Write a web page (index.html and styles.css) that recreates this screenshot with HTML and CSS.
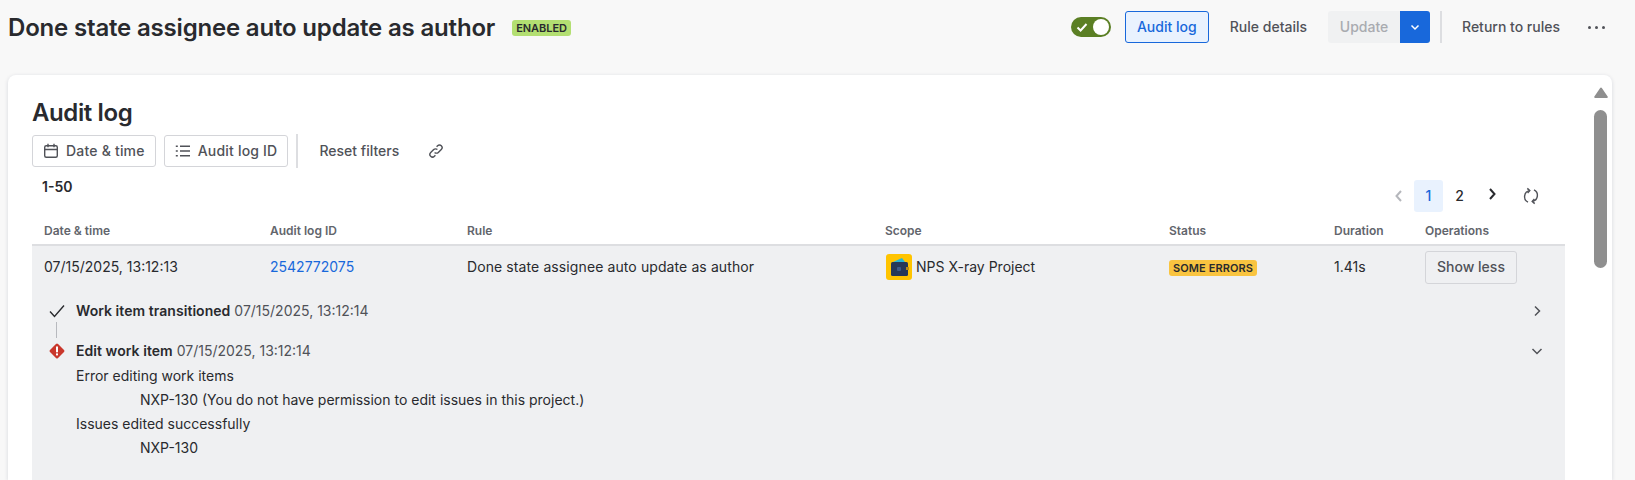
FILE: index.html
```html
<!DOCTYPE html>
<html lang="en">
<head>
  <meta charset="UTF-8" />
  <title>Audit log</title>
  <link rel="stylesheet" href="styles.css">
</head>
<body>

  <!-- Top bar -->
  <header class="top-bar">
    <div class="title-group">
      <h1 class="rule-title">Done state assignee auto update as author</h1>
      <span class="lozenge lozenge-green">Enabled</span>
    </div>
    <div class="actions">
      <span class="toggle">
        <svg class="toggle-check" width="12" height="12" viewBox="0 0 12 12"><path d="M1.500 6.500 4.600 9.500 10.500 3" fill="none" stroke="#fff" stroke-width="2"/></svg>
        <span class="toggle-knob"></span>
      </span>
      <button class="btn btn-selected">Audit log</button>
      <button class="btn btn-plain btn-details">Rule details</button>
      <div class="split-btn">
        <button class="btn btn-disabled">Update</button>
        <button class="btn btn-primary">
          <svg width="12" height="12" viewBox="0 0 12 12"><path d="M2.500 4.500 6 8 9.500 4.500" fill="none" stroke="#fff" stroke-width="1.500"/></svg>
        </button>
      </div>
      <span class="divider divider-top"></span>
      <button class="btn btn-plain btn-return">Return to rules</button>
      <span class="more-dots"><i></i><i></i><i></i></span>
    </div>
  </header>

  <!-- Main card -->
  <main class="card">
    <div class="card-body">
      <h2 class="card-title">Audit log</h2>

      <div class="filters">
        <button class="btn btn-outline btn-filter">
          <svg width="16" height="16" viewBox="0 0 16 16" fill="none" stroke="#505258" stroke-width="1.400"><rect x="1.700" y="2.700" width="12.600" height="11.600" rx="1.500"/><path d="M1.700 6.500h12.600M5 .8v3.400M11 .8v3.400"/></svg>
          Date &amp; time
        </button>
        <button class="btn btn-outline btn-filter">
          <svg width="16" height="16" viewBox="0 0 16 16" fill="none" stroke="#505258" stroke-width="1.400"><path d="M5 3.200h10M5 8h10M5 12.800h10M.8 3.200h2M.8 8h2M.8 12.800h2"/></svg>
          Audit log ID
        </button>
        <span class="divider divider-filters"></span>
        <button class="btn btn-plain btn-reset">Reset filters</button>
        <svg class="link-icon" width="16" height="16" viewBox="0 0 16 16" fill="none" stroke="#505258" stroke-width="1.400"><path d="M6.600 9.400a2.600 2.600 0 0 0 3.700 0l3-3a2.600 2.600 0 0 0-3.700-3.700l-1 1"/><path d="M9.400 6.600a2.600 2.600 0 0 0-3.700 0l-3 3a2.600 2.600 0 0 0 3.700 3.700l1-1"/></svg>
      </div>

      <div class="list-meta">
        <span class="range">1-50</span>
        <nav class="pager">
          <svg class="pager-arrow" width="16" height="16" viewBox="0 0 16 16"><path d="M10 3 5.500 8l4.500 5" fill="none" stroke="#b5b7bc" stroke-width="2"/></svg>
          <span class="page page-current">1</span>
          <span class="page page-other">2</span>
          <svg class="pager-arrow pager-next" width="16" height="16" viewBox="0 0 16 16"><path d="M6 3l4.500 5L6 13" fill="none" stroke="#292a2e" stroke-width="2"/></svg>
          <svg class="refresh" width="16" height="18" viewBox="0 0 16 18" fill="none" stroke="#505258" stroke-width="1.400"><path d="M5 15.200A6.200 6.200 0 0 1 6.500 3.600"/><path d="M4.300 1.400 6.800 3.600 4.600 6"/><path d="M11 2.800A6.200 6.200 0 0 1 9.500 14.400"/><path d="M11.700 16.600 9.200 14.400 11.400 12"/></svg>
        </nav>
      </div>

      <!-- Log table -->
      <div class="log-row log-head">
        <span>Date &amp; time</span>
        <span>Audit log ID</span>
        <span>Rule</span>
        <span>Scope</span>
        <span>Status</span>
        <span>Duration</span>
        <span>Operations</span>
      </div>

      <section class="log-entry">
        <div class="log-row">
          <span>07/15/2025, 13:12:13</span>
          <a class="log-link" href="#">2542772075</a>
          <span class="rule-name">Done state assignee auto update as author</span>
          <span class="scope">
            <svg class="project-icon" width="26" height="26" viewBox="0 0 26 26">
              <rect width="26" height="26" rx="3" fill="#ffc400"/>
              <path d="M7 8 16 4l3 4z" fill="#2ab5d6"/>
              <rect x="5" y="8" width="17" height="14" rx="1.500" fill="#253858"/>
              <rect x="11" y="13" width="4" height="4" rx="1" fill="#3c5a8a"/>
              <rect x="20" y="13" width="3" height="3" fill="#b98a16"/>
            </svg>
            NPS X-ray Project
          </span>
          <span><span class="lozenge lozenge-yellow">Some errors</span></span>
          <span>1.41s</span>
          <span><button class="btn btn-outline btn-less">Show less</button></span>
        </div>

        <div class="step">
          <svg class="step-icon" width="16" height="16" viewBox="0 0 16 16"><path d="M1 8.500 5.500 13.500 15 2.500" fill="none" stroke="#292a2e" stroke-width="1.400"/></svg>
          <p class="step-text"><b>Work item transitioned</b> 07/15/2025, 13:12:14</p>
          <svg class="step-chevron" width="12" height="12" viewBox="0 0 12 12"><path d="M4 1.500 8.500 6 4 10.500" fill="none" stroke="#505258" stroke-width="1.500"/></svg>
        </div>
        <span class="step-line"></span>
        <div class="step step-error">
          <svg class="step-icon" width="18" height="18" viewBox="0 0 18 18">
            <rect x="3.300" y="3.300" width="11.400" height="11.400" rx="1.500" transform="rotate(45 9 9)" fill="#c9372c"/>
            <rect x="8" y="4.500" width="2" height="5.800" fill="#fff"/>
            <rect x="8" y="11.400" width="2" height="2" fill="#fff"/>
          </svg>
          <p class="step-text"><b>Edit work item</b> 07/15/2025, 13:12:14</p>
          <svg class="step-chevron" width="12" height="12" viewBox="0 0 12 12"><path d="M1.500 4 6 8.500 10.500 4" fill="none" stroke="#505258" stroke-width="1.500"/></svg>
        </div>

        <div class="step-detail">
          <p>Error editing work items</p>
          <p class="detail-item">NXP-130 (You do not have permission to edit issues in this project.)</p>
          <p>Issues edited successfully</p>
          <p class="detail-item">NXP-130</p>
        </div>
      </section>
    </div>

    <!-- Scrollbar -->
    <div class="scrollbar">
      <svg class="scroll-up" width="14" height="11" viewBox="0 0 14 11"><path d="M7 1.500 12.800 10H1.200z" fill="#8f8f8f" stroke="#8f8f8f" stroke-width="2" stroke-linejoin="round"/></svg>
      <span class="scroll-thumb"></span>
    </div>
  </main>

</body>
</html>
```

FILE: styles.css
```css
/* Basic reset */
* {
  box-sizing: border-box;
  margin: 0;
  padding: 0;
}
html, body {
  height: 480px;
  overflow: hidden;
}
body {
  font-family: Inter, 'Noto Sans', sans-serif;
  font-size: 14px;
  line-height: 20px;
  background: #f8f8f8;
  color: #292a2e;
  padding: 0 8px;
}

/* Shared buttons */
.btn {
  font: inherit;
  height: 32px;
  padding: 0 12px;
  border: 1px solid transparent;
  border-radius: 3px;
  background: none;
  color: #505258;
  display: inline-flex;
  align-items: center;
  gap: 8px;
  white-space: nowrap;
}
.btn-plain {
  font-weight: 500;
}
.btn-selected {
  background: #e9f2fe;
  border-color: #1868db;
  color: #1868db;
  width: 84px;
  padding: 0;
  justify-content: center;
  font-weight: 500;
}
.btn-outline {
  background: transparent;
  border-color: #d4d5d9;
  font-weight: 500;
  padding: 0 10px;
}
.btn-filter {
  gap: 7px;
  letter-spacing: 0.2px;
}
.btn-disabled {
  background: #f0f1f2;
  color: #a9abb0;
  width: 72px;
  padding: 0;
  justify-content: center;
  border-radius: 3px 0 0 3px;
  font-weight: 500;
}
.btn-primary {
  background: #1868db;
  width: 30px;
  padding: 0;
  justify-content: center;
  border-radius: 0 3px 3px 0;
}

/* Lozenges */
.lozenge {
  display: inline-block;
  font-size: 11px;
  line-height: 16px;
  font-weight: 600;
  text-transform: uppercase;
  padding: 0 4px;
  border-radius: 3px;
  color: #292a2e;
}
.lozenge-green {
  background: #b3df72;
  letter-spacing: -0.05px;
}
.lozenge-yellow {
  background: #f9c440;
  letter-spacing: 0.1px;
}

/* Top bar */
.top-bar {
  height: 75px;
  display: flex;
  justify-content: space-between;
  align-items: flex-start;
}
.title-group {
  display: flex;
  align-items: center;
  gap: 17px;
  height: 56px;
}
.rule-title {
  font-size: 24px;
  line-height: 28px;
  font-weight: 600;
  letter-spacing: -0.18px;
}
.actions {
  display: flex;
  align-items: center;
  height: 32px;
  margin-top: 11px;
  padding-right: 22px;
}
.toggle {
  width: 40px;
  height: 20px;
  border-radius: 10px;
  background: #5b7f24;
  display: flex;
  align-items: center;
  justify-content: space-between;
  padding: 0 2px 0 5px;
  margin-right: 14px;
}
.toggle-knob {
  width: 16px;
  height: 16px;
  border-radius: 50%;
  background: #fff;
}
.btn-details {
  margin: 0 8px;
}
.divider {
  display: block;
  width: 2px;
  background: #dddee1;
}
.split-btn {
  display: flex;
}
.divider-top {
  height: 32px;
  margin: 0 7px 0 10px;
}
.btn-return {
  margin-right: 15px;
}
.more-dots {
  display: flex;
  gap: 4px;
}
.more-dots i {
  width: 3px;
  height: 3px;
  border-radius: 50%;
  background: #505258;
}

/* Main card */
.card {
  width: 1604px;
  height: 405px;
  background: #fff;
  border-radius: 8px 8px 0 0;
  box-shadow: 0 1px 4px rgba(9, 30, 66, 0.14);
  display: flex;
}
.card-body {
  flex: 1;
  padding: 22px 25px 0 24px;
}
.card-title {
  font-size: 24px;
  line-height: 32px;
  font-weight: 600;
  letter-spacing: -0.4px;
  margin-bottom: 6px;
}

/* Filters */
.filters {
  display: flex;
  align-items: center;
  height: 32px;
  gap: 8px;
}
.divider-filters {
  height: 34px;
}
.btn-reset {
  margin-left: 0;
}
.link-icon {
  margin-left: 8px;
}

/* Range and pagination */
.list-meta {
  height: 68px;
  display: flex;
  justify-content: space-between;
  padding: 10px 10px 0;
}
.range {
  font-weight: 600;
}
.pager {
  display: flex;
  align-items: center;
  height: 32px;
  margin-top: 3px;
  padding-right: 16px;
}
.page {
  width: 29px;
  height: 32px;
  display: flex;
  align-items: center;
  justify-content: center;
  border-radius: 3px;
  font-weight: 500;
}
.page-current {
  background: #e9f2fe;
  color: #1868db;
  margin-left: 7px;
}
.page-other {
  margin-left: 2px;
}
.pager-next {
  margin: 0 0 4px 10px;
}
.refresh {
  margin-left: 23px;
}

/* Log rows */
.log-row {
  display: grid;
  grid-template-columns: 226px 197px 418px 284px 165px 91px 1fr;
  align-items: center;
  padding-left: 12px;
}
.log-head {
  height: 30px;
  padding-top: 1px;
  margin-top: -19px;
  border-bottom: 2px solid #dddee1;
  color: #62656c;
  font-size: 12px;
  font-weight: 600;
}
.log-entry {
  background: #eff0f2;
  height: 234px;
}
.log-entry .log-row {
  height: 42px;
}
.log-link {
  color: #1868db;
  text-decoration: none;
}
.rule-name {
  letter-spacing: 0.1px;
}
.scope {
  display: flex;
  align-items: center;
  gap: 4px;
}
.project-icon {
  margin-left: 1px;
}
.btn-less {
  width: 92px;
  justify-content: center;
  height: 33px;
  padding: 0;
}

/* Steps under an expanded row */
.step {
  height: 28px;
  margin-top: 9px;
  display: flex;
  align-items: center;
  padding: 0 22px 0 16px;
}
.step-error {
  margin-top: 0;
}
.step-icon {
  flex: none;
  width: 18px;
  margin-right: 10px;
}
.step-text {
  flex: 1;
  color: #505258;
}
.step-text b {
  color: #292a2e;
  font-weight: 600;
  letter-spacing: 0.05px;
}
.step-line {
  display: block;
  width: 1px;
  height: 16px;
  margin: -3px 0 -1px 24px;
  background: #b7b9be;
}
.step-detail {
  margin-top: -1px;
  padding-left: 44px;
}
.step-detail p {
  height: 24px;
  line-height: 24px;
}
.step-detail .detail-item {
  padding-left: 64px;
}

/* Scrollbar */
.scrollbar {
  width: 22px;
  padding: 12px 0 0 4px;
  display: flex;
  flex-direction: column;
  align-items: flex-start;
}
.scroll-thumb {
  width: 13px;
  height: 158px;
  margin-top: 12px;
  border-radius: 7px;
  background: #8f8f8f;
}
```
